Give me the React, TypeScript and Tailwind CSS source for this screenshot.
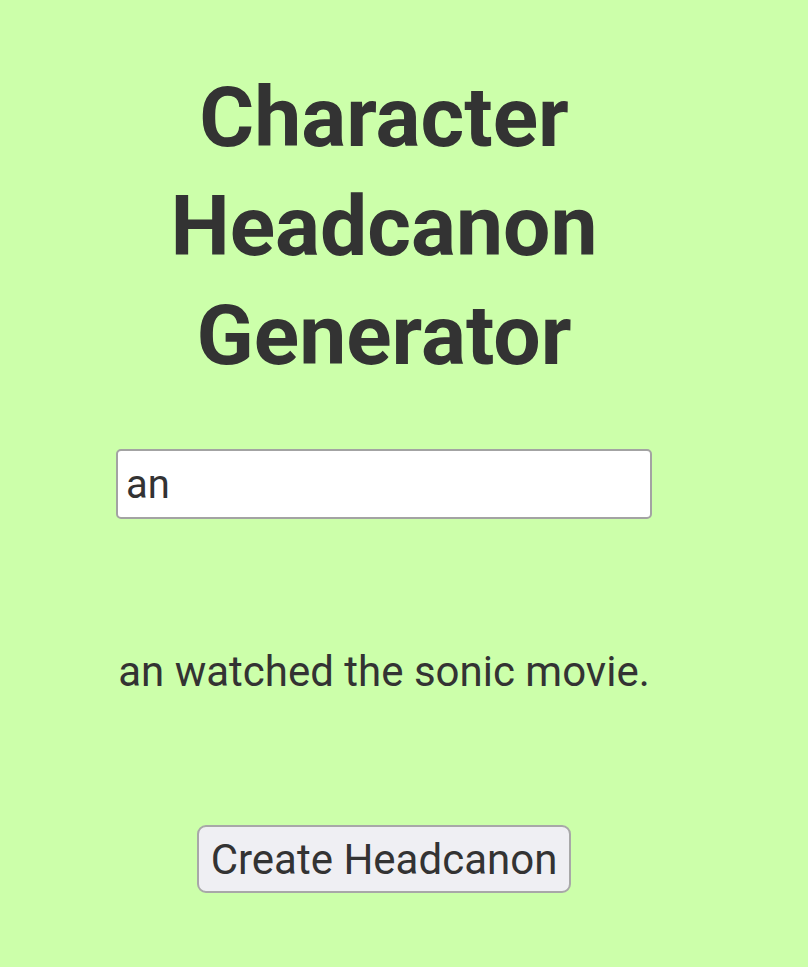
import React, { useState } from 'react';

const App: React.FC = () => {
  const [name, setName] = useState('an');
  const [headcanon, setHeadcanon] = useState('an watched the sonic movie.');

  const createHeadcanon = () => {
    setHeadcanon(`${name} watched the sonic movie.`);
  };

  return (
    <div className="min-h-screen bg-[#ccffaa] text-[#333333] font-['Roboto',sans-serif]">
      <div className="w-[768px] flex flex-col items-center pt-[63px]">
        <h1 className="text-[84px] leading-[109px] font-bold text-center w-[460px]">
          Character Headcanon Generator
        </h1>

        <input
          value={name}
          onChange={(e) => setName(e.target.value)}
          className="mt-[59px] w-[536px] h-[70px] bg-white border-2 border-[#a3a3a3] rounded-[5px] px-[8px] text-[40px] outline-none"
        />

        <p className="mt-[129px] text-[42px] leading-[48px] text-center">{headcanon}</p>

        <button
          onClick={createHeadcanon}
          className="mt-[129px] h-[68px] px-[12px] bg-[#efeff3] border-2 border-[#a8a8a8] rounded-[9px] text-[42px]"
        >
          Create Headcanon
        </button>
      </div>
    </div>
  );
};

export default App;
